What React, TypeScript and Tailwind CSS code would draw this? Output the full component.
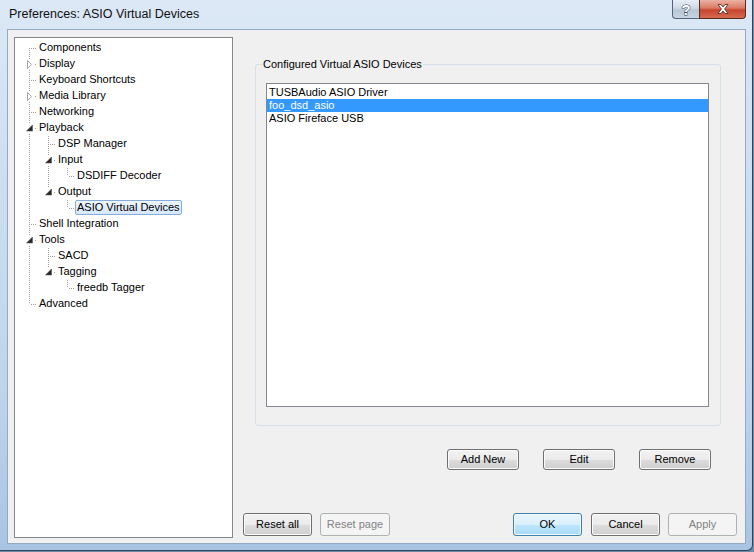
import React from "react";

type TreeNode = {
  label: string;
  children?: TreeNode[];
  collapsed?: boolean;
  selected?: boolean;
};

const tree: TreeNode[] = [
  { label: "Components" },
  { label: "Display", collapsed: true, children: [] },
  { label: "Keyboard Shortcuts" },
  { label: "Media Library", collapsed: true, children: [] },
  { label: "Networking" },
  {
    label: "Playback",
    children: [
      { label: "DSP Manager" },
      { label: "Input", children: [{ label: "DSDIFF Decoder" }] },
      { label: "Output", children: [{ label: "ASIO Virtual Devices", selected: true }] },
    ],
  },
  { label: "Shell Integration" },
  {
    label: "Tools",
    children: [
      { label: "SACD" },
      { label: "Tagging", children: [{ label: "freedb Tagger" }] },
    ],
  },
  { label: "Advanced" },
];

type Row = {
  node: TreeNode;
  guides: boolean[];
  hasNext: boolean;
  firstRoot: boolean;
};

function flatten(nodes: TreeNode[], guides: boolean[], out: Row[]) {
  nodes.forEach((node, i) => {
    const hasNext = i < nodes.length - 1;
    out.push({ node, guides, hasNext, firstRoot: guides.length === 0 && i === 0 });
    if (node.children && !node.collapsed) flatten(node.children, [...guides, hasNext], out);
  });
  return out;
}

const dots = (from: number, to: number) => {
  const r: number[] = [];
  for (let v = from; v < to; v += 2) r.push(v);
  return r;
};

const Guide = ({ on }: { on: boolean }) => (
  <svg width="19" height="16" className="shrink-0">
    {on && dots(0, 16).map((y) => <rect key={y} x="9" y={y} width="1" height="1" fill="#a0a0a0" />)}
  </svg>
);

const NodeCell = ({ row }: { row: Row }) => {
  const { node, hasNext, firstRoot } = row;
  const expandable = !!node.children;
  return (
    <svg width="17" height="16" className="shrink-0">
      {!firstRoot && dots(0, 8).map((y) => <rect key={"t" + y} x="9" y={y} width="1" height="1" fill="#a0a0a0" />)}
      {hasNext && dots(8, 16).map((y) => <rect key={"b" + y} x="9" y={y} width="1" height="1" fill="#a0a0a0" />)}
      {!expandable && dots(11, 18).map((x) => <rect key={"h" + x} x={x} y="8" width="1" height="1" fill="#a0a0a0" />)}
      {expandable && (
        <>
          <rect x="6" y="3" width="7" height="10" fill="#ffffff" />
          <rect x="15" y="8" width="1" height="1" fill="#a0a0a0" />
          {node.collapsed ? (
            <polygon points="7.5,4.5 11.5,8.5 7.5,12.5" fill="#ffffff" stroke="#a6a6a6" strokeWidth="1" />
          ) : (
            <polygon points="12.5,5 12.5,11 6.5,11" fill="#262626" stroke="#595959" strokeWidth="0.6" />
          )}
        </>
      )}
    </svg>
  );
};

const Tree = () => {
  const rows = flatten(tree, [], []);
  return (
    <div className="w-[219px] h-[501px] shrink-0 border border-[#828790] bg-white pl-[5px] pt-[2px]">
      {rows.map((row, i) => (
        <div key={i} className="flex h-4 items-start">
          {row.guides.map((g, j) => (
            <Guide key={j} on={g} />
          ))}
          <NodeCell row={row} />
          <span
            className={
              "h-[15px] leading-[13px] px-px border rounded-[2px] whitespace-nowrap " +
              (row.node.selected
                ? "border-[#84acdd] bg-[linear-gradient(180deg,#eef5fd_0%,#d6e7fb_100%)]"
                : "border-transparent")
            }
          >
            {row.node.label}
          </span>
        </div>
      ))}
    </div>
  );
};

type BtnKind = "normal" | "default" | "disabled";

const Btn = ({ label, kind = "normal", className = "" }: { label: string; kind?: BtnKind; className?: string }) => {
  const styles: Record<BtnKind, string> = {
    normal:
      "border-[#707070] text-black bg-[linear-gradient(180deg,#f2f2f2_0%,#ebebeb_50%,#dddddd_51%,#cfcfcf_100%)] shadow-[inset_0_0_0_1px_#fbfbfb]",
    default:
      "border-[#3c7fb1] text-black bg-[linear-gradient(180deg,#eaf6fd_0%,#d9f0fc_50%,#bee6fd_51%,#a7d9f5_100%)] shadow-[inset_0_0_0_1px_#f3fbff]",
    disabled: "border-[#adb2b5] text-[#838383] bg-[#f4f4f4]",
  };
  return (
    <div className={"flex items-center justify-center rounded-[3px] border " + styles[kind] + " " + className}>
      {label}
    </div>
  );
};

const devices = ["TUSBAudio ASIO Driver", "foo_dsd_asio", "ASIO Fireface USB"];

export default function App() {
  return (
    <div className="w-[754px] h-[552px] overflow-hidden bg-[#6f8aa6] font-['Liberation_Sans',Arial,sans-serif] text-[11px] text-black">
      <div className="w-[753px] h-[551px] rounded-br-[6px] border-r border-b border-[#32465d] bg-[linear-gradient(180deg,#dce8f5_0%,#cddff2_30%,#bfd5ec_70%,#a9c4e2_100%)] flex flex-col">
        {/* title bar */}
        <div className="h-[29px] flex items-start shrink-0">
          <div className="pl-[9px] pt-[6px] text-[12.5px] leading-[16px] text-[#111111] whitespace-nowrap">
            Preferences: ASIO Virtual Devices
          </div>
          <div className="ml-auto mr-[6px] flex">
            <div className="w-[27px] h-[19px] rounded-bl-[4px] border border-t-0 border-r-0 border-[#53657a] bg-[linear-gradient(180deg,#e6edf5_0%,#cfdae6_45%,#b7c6d6_55%,#c7d4e2_100%)] flex items-center justify-center">
              <span className="text-white font-bold text-[15px] leading-[15px] [-webkit-text-stroke:1px_#34465a] [paint-order:stroke_fill]">
                ?
              </span>
            </div>
            <div className="w-[47px] h-[19px] rounded-br-[4px] border border-t-0 border-[#5b2a20] bg-[linear-gradient(180deg,#eab2a4_0%,#da7a64_45%,#c7452f_55%,#d66a4f_100%)] flex items-center justify-center">
              <svg width="14" height="12" viewBox="0 0 14 12">
                <path
                  d="M2 1.5 L5 1.5 L7 4 L9 1.5 L12 1.5 L8.6 6 L12 10.5 L9 10.5 L7 8 L5 10.5 L2 10.5 L5.4 6 Z"
                  fill="#ffffff"
                  stroke="#4a1f16"
                  strokeWidth="0.8"
                  strokeLinejoin="round"
                />
              </svg>
            </div>
          </div>
        </div>

        {/* client */}
        <div className="ml-[7px] w-[739px] h-[515px] shrink-0 bg-[#f0f0f0] border border-[#95a9c0] flex">
          <div className="pl-[6px] pt-[7px]">
            <Tree />
          </div>

          <div className="ml-[10px] w-[494px] flex flex-col">
            {/* group box */}
            <div className="relative ml-[12px] mt-[34px] w-[466px] h-[362px] rounded-[3px] border border-[#d5dfe5]">
              <span className="absolute -top-[7px] left-[6px] px-px leading-[13px] bg-[#f0f0f0] whitespace-nowrap">
                Configured Virtual ASIO Devices
              </span>
              <div className="ml-[10px] mt-[18px] w-[443px] h-[324px] border border-[#828790] bg-white pt-[2px]">
                {devices.map((d, i) => (
                  <div
                    key={d}
                    className={
                      "h-[13px] leading-[13px] px-[2px] whitespace-nowrap " +
                      (i === 1 ? "bg-[#3399ff] text-white" : "")
                    }
                  >
                    {d}
                  </div>
                ))}
              </div>
            </div>

            {/* list buttons */}
            <div className="mt-[23px] mr-[26px] flex justify-end gap-[24px] h-[21px]">
              <Btn label="Add New" className="w-[72px]" />
              <Btn label="Edit" className="w-[72px]" />
              <Btn label="Remove" className="w-[72px]" />
            </div>

            {/* dialog buttons */}
            <div className="mt-[43px] flex h-[23px]">
              <Btn label="Reset all" className="w-[69px]" />
              <Btn label="Reset page" kind="disabled" className="ml-[8px] w-[70px]" />
              <Btn label="OK" kind="default" className="ml-auto w-[69px]" />
              <Btn label="Cancel" className="ml-[9px] w-[69px]" />
              <Btn label="Apply" kind="disabled" className="ml-[8px] w-[69px]" />
            </div>
          </div>
        </div>
      </div>
    </div>
  );
}
